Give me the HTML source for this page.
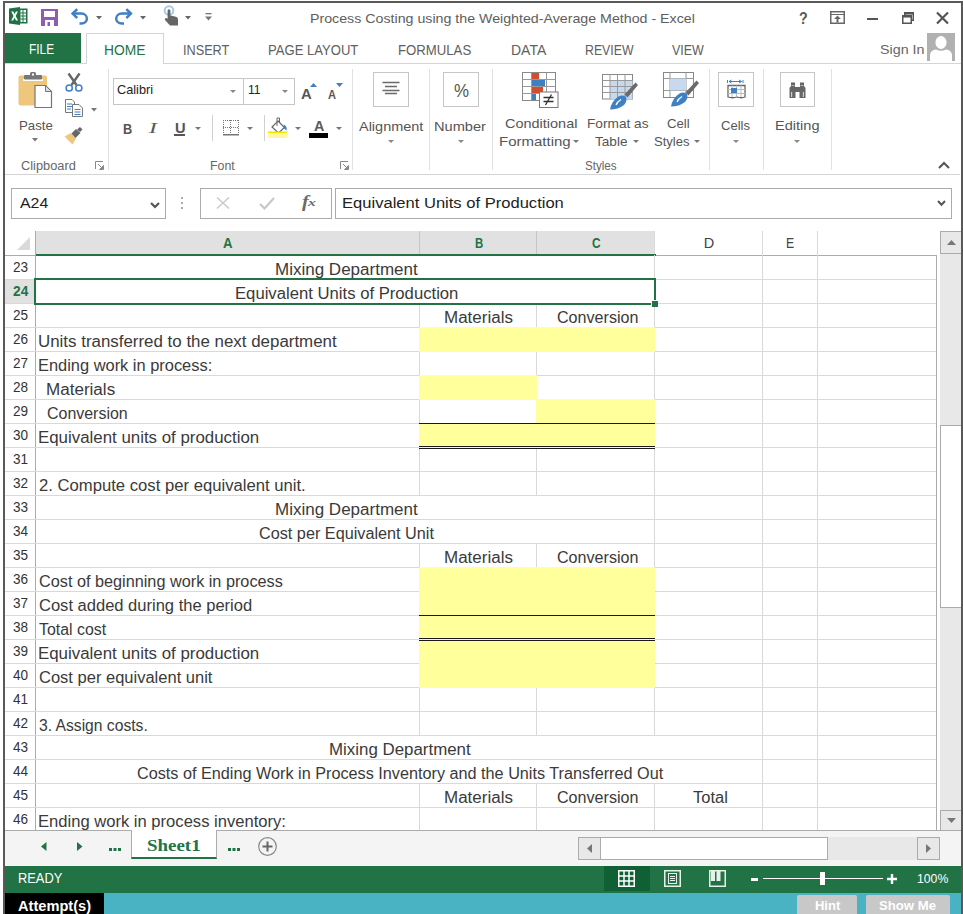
<!DOCTYPE html>
<html><head><meta charset="utf-8">
<style>
*{margin:0;padding:0;box-sizing:border-box}
html,body{width:963px;height:914px;overflow:hidden;background:#fff;position:relative;font-family:"Liberation Sans",sans-serif;color:#444}
.a{position:absolute}
.t{position:absolute;white-space:nowrap;line-height:1;transform-origin:0 0}
svg{position:absolute;overflow:visible}
</style></head><body>
<div class="a" style="left:3px;top:1px;width:960px;height:2px;background:#595959"></div>
<div class="a" style="left:3px;top:1px;width:2px;height:913px;background:#595959"></div>
<div class="a" style="left:961px;top:1px;width:2px;height:913px;background:#595959"></div>
<svg style="left:9px;top:7px" width="19" height="18" viewBox="0 0 19 18">
<path d="M0 1.5 L11 0 L11 18 L0 16.5 Z" fill="#1e7145"/>
<rect x="10" y="1.5" width="8.5" height="15" fill="#1e7145"/>
<rect x="11.5" y="3" width="5.5" height="12" fill="#fff"/>
<path d="M11.5 6h5.5M11.5 9h5.5M11.5 12h5.5M14 3v12" stroke="#1e7145" stroke-width="1"/>
<path d="M2.2 4.5 L4.3 4.5 L5.6 7 L6.9 4.5 L8.9 4.5 L6.7 9 L9 13.5 L7 13.5 L5.6 10.8 L4.2 13.5 L2.2 13.5 L4.5 9 Z" fill="#fff"/>
</svg>
<svg style="left:41px;top:9px" width="17" height="17" viewBox="0 0 17 17">
<path d="M0 0 H17 V17 H0 Z" fill="#8e5bb5"/>
<rect x="3" y="2" width="11" height="6" fill="#fff"/>
<rect x="4" y="11" width="9" height="6" fill="#fff"/>
<rect x="6.5" y="13" width="2.5" height="4" fill="#8e5bb5"/>
</svg>
<svg style="left:71px;top:8px" width="18" height="16" viewBox="0 0 18 16">
<path d="M6.2 1.2 L1.6 5.6 L6.2 10" fill="none" stroke="#3f7fc4" stroke-width="2.5"/>
<path d="M2.2 5.6 H10.5 A5.4 5 0 0 1 10.5 15.6 H8.5" fill="none" stroke="#3f7fc4" stroke-width="2.5"/>
</svg>
<svg style="left:96px;top:16px" width="6" height="4"><path d="M0 0H6L3 3.5Z" fill="#666"/></svg>
<svg style="left:114px;top:8px" width="19" height="16" viewBox="0 0 19 16">
<path d="M12.3 1.2 L16.9 5.6 L12.3 10" fill="none" stroke="#3f7fc4" stroke-width="2.5"/>
<path d="M16.3 5.6 H7.8 A5.6 5 0 0 0 7.8 15.6 H10" fill="none" stroke="#3f7fc4" stroke-width="2.5"/>
</svg>
<svg style="left:140px;top:16px" width="6" height="4"><path d="M0 0H6L3 3.5Z" fill="#666"/></svg>
<svg style="left:164px;top:5px" width="15" height="21" viewBox="0 0 15 21">
<circle cx="5" cy="5.5" r="4.3" fill="none" stroke="#a9c8ea" stroke-width="2"/>
<path d="M3.6 5 Q5 3.6 6.4 5 V10.5 L11 11.5 Q14 12 14 14.5 V20.5 H6 L0.8 14.8 Q0.5 13 2.2 13 L3.6 13.8 Z" fill="#666"/>
</svg>
<svg style="left:185px;top:16px" width="6" height="4"><path d="M0 0H6L3 3.5Z" fill="#666"/></svg>
<svg style="left:205px;top:13px" width="7" height="8"><rect x="0.5" y="0" width="6" height="1.3" fill="#777"/><path d="M0 3.5H7L3.5 7.5Z" fill="#777"/></svg>
<svg style="left:830px;top:11px" width="15" height="13" viewBox="0 0 15 13">
<rect x="0.75" y="0.75" width="13.5" height="11.5" fill="none" stroke="#666" stroke-width="1.5"/>
<path d="M1 3.5H14" stroke="#666" stroke-width="1"/>
<path d="M7.5 4.5 L4 8 H6.5 V11.5 H8.5 V8 H11 Z" fill="#666"/>
</svg>
<div class="a" style="left:867px;top:18px;width:11px;height:2px;background:#555"></div>
<svg style="left:902px;top:12px" width="12" height="12" viewBox="0 0 12 12">
<rect x="2.75" y="0.75" width="8.5" height="7.5" fill="none" stroke="#555" stroke-width="1.5"/>
<rect x="0.75" y="3.75" width="8.5" height="7.5" fill="#fff" stroke="#555" stroke-width="1.5"/>
<rect x="0.75" y="3.75" width="8.5" height="1.8" fill="#555"/>
<rect x="2.75" y="0.75" width="8.5" height="1.8" fill="#555"/>
</svg>
<svg style="left:936px;top:12px" width="13" height="12" viewBox="0 0 13 12">
<path d="M1 0.5 L12 11.5 M12 0.5 L1 11.5" stroke="#555" stroke-width="2.2"/>
</svg>
<div class="a" style="left:5px;top:63px;width:956px;height:1px;background:#d4d4d4"></div>
<div class="a" style="left:5px;top:33px;width:76px;height:30px;background:#217346"></div>
<div class="a" style="left:86px;top:33px;width:78px;height:31px;border:1px solid #d4d4d4;border-bottom:none;background:#fff"></div>
<svg style="left:927px;top:33px" width="28" height="28" viewBox="0 0 28 28">
<rect x="0" y="0" width="28" height="28" fill="#b1b1b1"/>
<ellipse cx="14" cy="9.5" rx="5.6" ry="6.5" fill="#fff"/>
<path d="M3 28 V22 Q3.5 17 9 16.5 Q14 19 19 16.5 Q24.5 17 25 22 V28 Z" fill="#fff"/>
</svg>
<div class="a" style="left:5px;top:174px;width:955px;height:1px;background:#d4d4d4"></div>
<div class="a" style="left:108px;top:69px;width:1px;height:101px;background:#e1e1e1"></div>
<div class="a" style="left:352px;top:69px;width:1px;height:101px;background:#e1e1e1"></div>
<div class="a" style="left:429px;top:69px;width:1px;height:101px;background:#e1e1e1"></div>
<div class="a" style="left:492px;top:69px;width:1px;height:101px;background:#e1e1e1"></div>
<div class="a" style="left:709px;top:69px;width:1px;height:101px;background:#e1e1e1"></div>
<div class="a" style="left:763px;top:69px;width:1px;height:101px;background:#e1e1e1"></div>
<div class="a" style="left:831px;top:69px;width:1px;height:101px;background:#e1e1e1"></div>
<svg style="left:18px;top:71px" width="36" height="38" viewBox="0 0 36 38">
<rect x="0.5" y="4.5" width="28.5" height="30" rx="2" fill="#eec77d"/>
<rect x="5" y="8" width="20" height="2" fill="#fff"/>
<rect x="6" y="4" width="18" height="4.5" rx="1" fill="#777"/>
<rect x="12" y="1" width="6" height="5" rx="1.5" fill="#777"/>
<rect x="14" y="2.5" width="2" height="2" fill="#fff"/>
<path d="M17 14.5 H27.5 L33.5 20.5 V36.5 H17 Z" fill="#fff" stroke="#777" stroke-width="1.2"/>
<path d="M27.5 14.5 V20.5 H33.5 Z" fill="#ddd" stroke="#777" stroke-width="1"/>
</svg>
<svg style="left:32px;top:138px" width="6" height="4"><path d="M0 0H6L3 3.5Z" fill="#777"/></svg>
<svg style="left:65px;top:73px" width="18" height="19" viewBox="0 0 18 19">
<path d="M3.5 0.5 L11.5 12 M14.5 0.5 L6.5 12" stroke="#666" stroke-width="2.4"/>
<circle cx="4.2" cy="15" r="3.1" fill="none" stroke="#3f7fc4" stroke-width="1.5"/>
<circle cx="13.8" cy="15" r="3.1" fill="none" stroke="#3f7fc4" stroke-width="1.5"/>
</svg>
<svg style="left:65px;top:99px" width="18" height="18" viewBox="0 0 18 18">
<path d="M0.5 0.5 H7 L9.5 3 V13.5 H0.5 Z" fill="#fff" stroke="#777" stroke-width="1"/>
<path d="M2 5h5M2 7.5h5M2 10h4" stroke="#3f7fc4" stroke-width="1"/>
<path d="M7.5 5.5 H14 L17.5 9 V17.5 H7.5 Z" fill="#fff" stroke="#777" stroke-width="1"/>
<path d="M9.5 10.5h6M9.5 13h6M9.5 15.5h6" stroke="#3f7fc4" stroke-width="1"/>
</svg>
<svg style="left:91px;top:108px" width="6" height="4"><path d="M0 0H6L3 3.5Z" fill="#777"/></svg>
<svg style="left:64px;top:127px" width="19" height="18" viewBox="0 0 19 18">
<path d="M0.5 9.5 L7 6 L12 11.5 L8.5 17.5 Z" fill="#eec77d"/>
<path d="M7.5 6.5 L12 2 L16.5 6 L11.5 11 Z" fill="#666"/>
<path d="M13 2.5 L16 0 L18.5 2.5 L16 5 Z" fill="#666"/>
</svg>
<svg style="left:95px;top:161px" width="9" height="9" viewBox="0 0 9 9">
<path d="M0.5 8 V0.5 H8" fill="none" stroke="#888" stroke-width="1"/>
<path d="M3 3 L7.5 7.5 M8.5 4.5 V8.5 H4.5 Z" stroke="#888" stroke-width="1" fill="#888"/>
</svg>
<div class="a" style="left:113px;top:78px;width:131px;height:27px;border:1px solid #c6c6c6;background:#fff"></div>
<div class="a" style="left:243px;top:78px;width:52px;height:27px;border:1px solid #c6c6c6;background:#fff"></div>
<svg style="left:230px;top:90px" width="6" height="4"><path d="M0 0H6L3 3Z" fill="#888"/></svg>
<svg style="left:282px;top:90px" width="6" height="4"><path d="M0 0H6L3 3Z" fill="#888"/></svg>
<svg style="left:310px;top:83px" width="7" height="4"><path d="M0 4H7L3.5 0Z" fill="#3f7fc4"/></svg>
<svg style="left:336px;top:83px" width="7" height="4"><path d="M0 0H7L3.5 4Z" fill="#3f7fc4"/></svg>
<div class="a" style="left:174px;top:134px;width:11px;height:1.5px;background:#555"></div>
<svg style="left:195px;top:127px" width="6" height="4"><path d="M0 0H6L3 3Z" fill="#777"/></svg>
<div class="a" style="left:212px;top:115px;width:1px;height:26px;background:#d0d0d0"></div>
<svg style="left:223px;top:120px" width="16" height="16" viewBox="0 0 16 16"><g fill="#777"><rect x="0" y="0" width="1" height="1"/><rect x="0" y="2" width="1" height="1"/><rect x="0" y="4" width="1" height="1"/><rect x="0" y="6" width="1" height="1"/><rect x="0" y="8" width="1" height="1"/><rect x="0" y="10" width="1" height="1"/><rect x="0" y="12" width="1" height="1"/><rect x="7" y="0" width="1" height="1"/><rect x="7" y="2" width="1" height="1"/><rect x="7" y="4" width="1" height="1"/><rect x="7" y="6" width="1" height="1"/><rect x="7" y="8" width="1" height="1"/><rect x="7" y="10" width="1" height="1"/><rect x="7" y="12" width="1" height="1"/><rect x="15" y="0" width="1" height="1"/><rect x="15" y="2" width="1" height="1"/><rect x="15" y="4" width="1" height="1"/><rect x="15" y="6" width="1" height="1"/><rect x="15" y="8" width="1" height="1"/><rect x="15" y="10" width="1" height="1"/><rect x="15" y="12" width="1" height="1"/><rect x="0" y="0" width="1" height="1"/><rect x="2" y="0" width="1" height="1"/><rect x="4" y="0" width="1" height="1"/><rect x="6" y="0" width="1" height="1"/><rect x="8" y="0" width="1" height="1"/><rect x="10" y="0" width="1" height="1"/><rect x="12" y="0" width="1" height="1"/><rect x="14" y="0" width="1" height="1"/><rect x="0" y="7" width="1" height="1"/><rect x="2" y="7" width="1" height="1"/><rect x="4" y="7" width="1" height="1"/><rect x="6" y="7" width="1" height="1"/><rect x="8" y="7" width="1" height="1"/><rect x="10" y="7" width="1" height="1"/><rect x="12" y="7" width="1" height="1"/><rect x="14" y="7" width="1" height="1"/></g><rect x="0" y="14" width="16" height="1.5" fill="#777"/></svg>
<svg style="left:247px;top:127px" width="6" height="4"><path d="M0 0H6L3 3Z" fill="#777"/></svg>
<div class="a" style="left:264px;top:115px;width:1px;height:26px;background:#d0d0d0"></div>
<svg style="left:268px;top:117px" width="20" height="21" viewBox="0 0 20 21">
<path d="M10 4 L16.5 10.5 L10.5 16 L4 10 Z" fill="#fff" stroke="#666" stroke-width="1.2"/>
<path d="M9 1 V9 M9 1 H11.5 V5" fill="none" stroke="#666" stroke-width="1"/>
<path d="M16 7.5 Q19.5 9.5 18.5 13.5 L15.5 11 Z" fill="#3f7fc4"/>
<rect x="0" y="14.5" width="19" height="1.6" fill="#f2e600"/>
<rect x="0" y="16.1" width="19" height="4.9" fill="#fdf9a3"/>
</svg>
<svg style="left:295px;top:127px" width="6" height="4"><path d="M0 0H6L3 3Z" fill="#777"/></svg>
<div class="a" style="left:309px;top:133px;width:19px;height:5px;background:#000"></div>
<svg style="left:336px;top:127px" width="6" height="4"><path d="M0 0H6L3 3Z" fill="#777"/></svg>
<svg style="left:340px;top:161px" width="9" height="9" viewBox="0 0 9 9">
<path d="M0.5 8 V0.5 H8" fill="none" stroke="#888" stroke-width="1"/>
<path d="M3 3 L7.5 7.5 M8.5 4.5 V8.5 H4.5 Z" stroke="#888" stroke-width="1" fill="#888"/>
</svg>
<div class="a" style="left:373px;top:72px;width:36px;height:35px;border:1px solid #c6c6c6"></div>
<svg style="left:382px;top:81px" width="18" height="14" viewBox="0 0 18 14">
<path d="M0.5 1.5H17.5M3 5.5H15M0.5 9.5H17.5M3 12.5H15" stroke="#6a6a6a" stroke-width="1.3"/>
</svg>
<svg style="left:388px;top:140px" width="6" height="4"><path d="M0 0H6L3 3Z" fill="#888"/></svg>
<div class="a" style="left:443px;top:72px;width:36px;height:35px;border:1px solid #c6c6c6"></div>
<svg style="left:458px;top:140px" width="6" height="4"><path d="M0 0H6L3 3Z" fill="#888"/></svg>
<svg style="left:522px;top:72px" width="37" height="36" viewBox="0 0 37 36">
<rect x="0.5" y="0.5" width="33" height="28" fill="#fff" stroke="#888" stroke-width="1"/>
<path d="M0.5 7.5H33.5M0.5 14.5H33.5M0.5 21.5H33.5M9.5 0.5V28.5M24.5 0.5V28.5" stroke="#999" stroke-width="1"/>
<rect x="10" y="1" width="7" height="6" fill="#d24d2c"/>
<rect x="10" y="8" width="13" height="6" fill="#3f7fc4"/>
<rect x="10" y="15" width="11" height="6" fill="#d24d2c"/>
<rect x="10" y="22" width="4" height="6" fill="#3f7fc4"/>
<rect x="17.5" y="20" width="18.5" height="15.5" fill="#fff" stroke="#777" stroke-width="1"/>
<path d="M21.5 25.5H31.5M21.5 29.5H31.5M29.5 22.5L23.5 33" stroke="#333" stroke-width="1.3"/>
</svg>
<svg style="left:573px;top:140px" width="6" height="4"><path d="M0 0H6L3 3Z" fill="#777"/></svg>
<svg style="left:602px;top:74px" width="36" height="36" viewBox="0 0 36 36">
<rect x="0.5" y="0.5" width="30" height="24.5" fill="#fff" stroke="#888"/>
<rect x="8" y="6.5" width="22.5" height="18.5" fill="#c6d9ee"/>
<path d="M0.5 6.5H30.5M0.5 12.5H30.5M0.5 18.5H30.5M8 0.5V25M15.5 0.5V25M23 0.5V25" stroke="#999" stroke-width="1"/>
<path d="M22.5 20.5 L33.5 8.5 L36 11 L25.5 23.5 Z" fill="#6a6a6a"/>
<path d="M8 35.5 Q9.5 27 16.5 22.5 Q20.5 20.5 24 23 Q25.5 27 22 31 Q16 35.5 8 35.5 Z" fill="#3f7fc4"/>
<path d="M14 31 Q15.5 27.5 19 25.5" stroke="#fff" stroke-width="1.3" fill="none"/>
</svg>
<svg style="left:633px;top:140px" width="6" height="4"><path d="M0 0H6L3 3Z" fill="#777"/></svg>
<svg style="left:663px;top:72px" width="36" height="36" viewBox="0 0 36 36">
<rect x="0.5" y="0.5" width="30" height="25" fill="#fff" stroke="#888"/>
<path d="M0.5 6.5H30.5M0.5 18.5H30.5M7 0.5V25.5M23 0.5V25.5" stroke="#999" stroke-width="1"/>
<rect x="7" y="6.5" width="16" height="12" fill="#c6d9ee"/>
<path d="M22.5 20.5 L33.5 8.5 L36 11 L25.5 23.5 Z" fill="#6a6a6a"/>
<path d="M8 34.5 Q9.5 26 16.5 21.5 Q20.5 19.5 24 22 Q25.5 26 22 30 Q16 34.5 8 34.5 Z" fill="#3f7fc4"/>
<path d="M14 30 Q15.5 26.5 19 24.5" stroke="#fff" stroke-width="1.3" fill="none"/>
</svg>
<svg style="left:694px;top:140px" width="6" height="4"><path d="M0 0H6L3 3Z" fill="#777"/></svg>
<div class="a" style="left:718px;top:72px;width:36px;height:35px;border:1px solid #c6c6c6"></div>
<svg style="left:727px;top:80px" width="19" height="19" viewBox="0 0 19 19">
<path d="M0.5 0V3M16 0V3M2 1.5H14.5" stroke="#3f7fc4" stroke-width="1"/>
<path d="M2 1.5L4.5 0M2 1.5L4.5 3M14.5 1.5L12 0M14.5 1.5L12 3" stroke="#3f7fc4" stroke-width="1"/>
<path d="M1 5.5H18V17 Q14.5 18.5 10 17 Q5.5 18.5 1 17 Z" fill="#fff" stroke="#666" stroke-width="1.3"/>
<path d="M1 9.5H18M1 13.5H18M5 5.5V17M9.5 5.5V17M14 5.5V17" stroke="#bbb" stroke-width="1"/>
<rect x="4" y="8" width="6" height="5" fill="#3f7fc4"/>
</svg>
<svg style="left:733px;top:140px" width="6" height="4"><path d="M0 0H6L3 3Z" fill="#888"/></svg>
<div class="a" style="left:780px;top:72px;width:35px;height:35px;border:1px solid #c6c6c6"></div>
<svg style="left:788px;top:82px" width="19" height="16" viewBox="0 0 19 16">
<path d="M3 0.5H7V5H12V0.5H16V4L17.5 6V16H11.5V10H7.5V16H1.5V6L3 4Z" fill="#666"/>
<path d="M7.5 6.5H11.5V9H7.5Z" fill="#666"/>
<rect x="3" y="10" width="1.2" height="5" fill="#ccc"/>
<rect x="14.8" y="10" width="1.2" height="5" fill="#ccc"/>
<path d="M3.5 3.5H6.5M12.5 3.5H15.5" stroke="#ccc" stroke-width="0.8"/>
</svg>
<svg style="left:794px;top:140px" width="6" height="4"><path d="M0 0H6L3 3Z" fill="#888"/></svg>
<svg style="left:938px;top:161px" width="12" height="8" viewBox="0 0 12 8">
<path d="M1 7 L6 2 L11 7" fill="none" stroke="#555" stroke-width="2"/>
</svg>
<div class="a" style="left:11px;top:188px;width:155px;height:31px;border:1px solid #ababab"></div>
<svg style="left:150px;top:202px" width="10" height="7" viewBox="0 0 10 7">
<path d="M1 1 L5 5 L9 1" fill="none" stroke="#555" stroke-width="2.2"/>
</svg>
<svg style="left:181px;top:197px" width="3" height="13"><rect x="0" y="0" width="2" height="2" fill="#aaa"/><rect x="0" y="5" width="2" height="2" fill="#aaa"/><rect x="0" y="10" width="2" height="2" fill="#aaa"/></svg>
<div class="a" style="left:200px;top:188px;width:132px;height:31px;border:1px solid #ababab"></div>
<svg style="left:216px;top:197px" width="14" height="12" viewBox="0 0 14 12">
<path d="M1 0.5 L13 11.5 M13 0.5 L1 11.5" stroke="#c8c8c8" stroke-width="1.4"/>
</svg>
<svg style="left:259px;top:197px" width="16" height="13" viewBox="0 0 16 13">
<path d="M1 7 L5.5 11.5 L15 1" fill="none" stroke="#c6c6c6" stroke-width="2"/>
</svg>
<div class="a" style="left:335px;top:188px;width:617px;height:31px;border:1px solid #ababab"></div>
<svg style="left:937px;top:200px" width="9" height="7" viewBox="0 0 9 7">
<path d="M1 1 L4.5 4.7 L8 1" fill="none" stroke="#555" stroke-width="2"/>
</svg>
<div class="a" style="left:940px;top:231px;width:21px;height:600px;background:#e8e8e8"></div>
<div class="a" style="left:940px;top:231px;width:21px;height:23px;border:1px solid #ababab;border-right:none;background:#e8e8e8"></div>
<svg style="left:947px;top:240px" width="9" height="5"><path d="M0 5H9L4.5 0Z" fill="#777"/></svg>
<div class="a" style="left:940px;top:425px;width:21px;height:183px;border:1px solid #ababab;border-right:none;background:#fff"></div>
<div class="a" style="left:940px;top:810px;width:21px;height:21px;border:1px solid #ababab;border-right:none;background:#e8e8e8"></div>
<svg style="left:947px;top:818px" width="9" height="5"><path d="M0 0H9L4.5 5Z" fill="#777"/></svg>
<div class="a" style="left:5px;top:830px;width:956px;height:36px;background:#f4f4f4;border-top:1px solid #ababab;z-index:5"></div>
<div class="a" style="left:131px;top:830px;width:86px;height:29px;background:#fff;border:1px solid #ababab;border-top:none;border-bottom:2px solid #217346;z-index:6"></div>
<svg style="left:41px;top:842px;z-index:6" width="6" height="9"><path d="M5.5 0V9L0 4.5Z" fill="#217346"/></svg>
<svg style="left:77px;top:842px;z-index:6" width="6" height="9"><path d="M0 0V9L5.5 4.5Z" fill="#217346"/></svg>
<svg style="left:109px;top:848px;z-index:6" width="13" height="4"><rect x="0" y="0" width="3" height="3" fill="#217346"/><rect x="4.5" y="0" width="3" height="3" fill="#217346"/><rect x="9" y="0" width="3" height="3" fill="#217346"/></svg>
<svg style="left:228px;top:848px;z-index:6" width="13" height="4"><rect x="0" y="0" width="3" height="3" fill="#217346"/><rect x="4.5" y="0" width="3" height="3" fill="#217346"/><rect x="9" y="0" width="3" height="3" fill="#217346"/></svg>
<svg style="left:258px;top:837px;z-index:6" width="19" height="19" viewBox="0 0 19 19">
<circle cx="9.5" cy="9.5" r="8.8" fill="none" stroke="#888" stroke-width="1.2"/>
<path d="M9.5 4.5V14.5M4.5 9.5H14.5" stroke="#666" stroke-width="2"/>
</svg>
<div class="a" style="left:578px;top:837px;width:339px;height:23px;background:#e8e8e8;z-index:6"></div>
<div class="a" style="left:578px;top:837px;width:23px;height:23px;border:1px solid #ababab;background:#e8e8e8;z-index:6"></div>
<svg style="left:587px;top:844px;z-index:7" width="5" height="9"><path d="M5 0V9L0 4.5Z" fill="#777"/></svg>
<div class="a" style="left:600px;top:837px;width:228px;height:23px;border:1px solid #ababab;background:#fff;z-index:6"></div>
<div class="a" style="left:917px;top:837px;width:23px;height:23px;border:1px solid #ababab;background:#e8e8e8;z-index:6"></div>
<svg style="left:926px;top:844px;z-index:7" width="5" height="9"><path d="M0 0V9L5 4.5Z" fill="#777"/></svg>
<div class="a" style="left:5px;top:866px;width:956px;height:27px;background:#217346;z-index:5"></div>
<div class="a" style="left:604px;top:866px;width:46px;height:25px;background:#0f6135;z-index:6"></div>
<svg style="left:618px;top:870px;z-index:7" width="17" height="17" viewBox="0 0 17 17">
<path d="M0.75 0.75H16.25V16.25H0.75Z M0.75 6H16.25M0.75 11H16.25M6 0.75V16.25M11 0.75V16.25" fill="none" stroke="#fff" stroke-width="1.5"/>
</svg>
<svg style="left:664px;top:870px;z-index:7" width="17" height="17" viewBox="0 0 17 17">
<rect x="0.75" y="0.75" width="15.5" height="15.5" fill="none" stroke="#e8f0ea" stroke-width="1.5"/>
<rect x="4.5" y="3.5" width="8" height="10" fill="none" stroke="#e8f0ea" stroke-width="1"/>
<path d="M6 6.5H11M6 8.5H11M6 10.5H11" stroke="#e8f0ea" stroke-width="1"/>
</svg>
<svg style="left:709px;top:870px;z-index:7" width="17" height="17" viewBox="0 0 17 17">
<path d="M0.75 0.75H16.25V16.25H0.75Z" fill="none" stroke="#e8f0ea" stroke-width="1.5"/>
<rect x="2" y="1" width="4" height="10" fill="#e8f0ea"/>
<rect x="7.5" y="1" width="4" height="10" fill="#e8f0ea"/>
</svg>
<div class="a" style="left:751px;top:878px;width:7px;height:3px;background:#fff;z-index:7"></div>
<div class="a" style="left:763px;top:878px;width:120px;height:1px;background:#fff;z-index:7"></div>
<div class="a" style="left:820px;top:872px;width:5px;height:13px;background:#fff;z-index:7"></div>
<svg style="left:887px;top:874px;z-index:7" width="10" height="10"><path d="M5 0V10M0 5H10" stroke="#fff" stroke-width="2.4"/></svg>
<div class="a" style="left:5px;top:893px;width:99px;height:21px;background:#000;z-index:5"></div>
<div class="a" style="left:104px;top:893px;width:857px;height:21px;background:#4ab3c3;z-index:5"></div>
<div class="a" style="left:797px;top:895px;width:60px;height:19px;background:#c8c8c8;border-radius:2px 2px 0 0;z-index:6"></div>
<div class="a" style="left:866px;top:895px;width:84px;height:19px;background:#c8c8c8;border-radius:2px 2px 0 0;z-index:6"></div>
<div class="a" style="left:36px;top:231px;width:618px;height:24px;background:#e1e1e1"></div>
<div class="a" style="left:419px;top:231px;width:1px;height:24px;background:#c6c6c6"></div>
<div class="a" style="left:536px;top:231px;width:1px;height:24px;background:#c6c6c6"></div>
<div class="a" style="left:654px;top:231px;width:1px;height:24px;background:#dadada"></div>
<div class="a" style="left:762px;top:231px;width:1px;height:24px;background:#dadada"></div>
<div class="a" style="left:817px;top:231px;width:1px;height:24px;background:#dadada"></div>
<div class="a" style="left:5px;top:255px;width:932px;height:1px;background:#ababab"></div>
<div class="a" style="left:36px;top:254px;width:620px;height:2px;background:#217346"></div>
<svg style="left:17px;top:237px" width="14" height="14"><path d="M13 0 L13 13 L0 13 Z" fill="#dadada"/></svg>
<div class="a" style="left:35px;top:231px;width:1px;height:599px;background:#ababab"></div>
<div class="a" style="left:5px;top:279px;width:30px;height:24px;background:#e1e1e1"></div>
<div class="a" style="left:5px;top:279px;width:931px;height:1px;background:#d9d9d9"></div>
<div class="a" style="left:5px;top:303px;width:931px;height:1px;background:#d9d9d9"></div>
<div class="a" style="left:5px;top:327px;width:931px;height:1px;background:#d9d9d9"></div>
<div class="a" style="left:5px;top:351px;width:931px;height:1px;background:#d9d9d9"></div>
<div class="a" style="left:5px;top:375px;width:931px;height:1px;background:#d9d9d9"></div>
<div class="a" style="left:5px;top:399px;width:931px;height:1px;background:#d9d9d9"></div>
<div class="a" style="left:5px;top:423px;width:931px;height:1px;background:#d9d9d9"></div>
<div class="a" style="left:5px;top:447px;width:931px;height:1px;background:#d9d9d9"></div>
<div class="a" style="left:5px;top:471px;width:931px;height:1px;background:#d9d9d9"></div>
<div class="a" style="left:5px;top:495px;width:931px;height:1px;background:#d9d9d9"></div>
<div class="a" style="left:5px;top:519px;width:931px;height:1px;background:#d9d9d9"></div>
<div class="a" style="left:5px;top:543px;width:931px;height:1px;background:#d9d9d9"></div>
<div class="a" style="left:5px;top:567px;width:931px;height:1px;background:#d9d9d9"></div>
<div class="a" style="left:5px;top:591px;width:931px;height:1px;background:#d9d9d9"></div>
<div class="a" style="left:5px;top:615px;width:931px;height:1px;background:#d9d9d9"></div>
<div class="a" style="left:5px;top:639px;width:931px;height:1px;background:#d9d9d9"></div>
<div class="a" style="left:5px;top:663px;width:931px;height:1px;background:#d9d9d9"></div>
<div class="a" style="left:5px;top:687px;width:931px;height:1px;background:#d9d9d9"></div>
<div class="a" style="left:5px;top:711px;width:931px;height:1px;background:#d9d9d9"></div>
<div class="a" style="left:5px;top:735px;width:931px;height:1px;background:#d9d9d9"></div>
<div class="a" style="left:5px;top:759px;width:931px;height:1px;background:#d9d9d9"></div>
<div class="a" style="left:5px;top:783px;width:931px;height:1px;background:#d9d9d9"></div>
<div class="a" style="left:5px;top:807px;width:931px;height:1px;background:#d9d9d9"></div>
<div class="a" style="left:654px;top:255px;width:1px;height:24px;background:#d9d9d9"></div>
<div class="a" style="left:762px;top:255px;width:1px;height:24px;background:#d9d9d9"></div>
<div class="a" style="left:817px;top:255px;width:1px;height:24px;background:#d9d9d9"></div>
<div class="a" style="left:654px;top:279px;width:1px;height:24px;background:#d9d9d9"></div>
<div class="a" style="left:762px;top:279px;width:1px;height:24px;background:#d9d9d9"></div>
<div class="a" style="left:817px;top:279px;width:1px;height:24px;background:#d9d9d9"></div>
<div class="a" style="left:419px;top:303px;width:1px;height:24px;background:#d9d9d9"></div>
<div class="a" style="left:536px;top:303px;width:1px;height:24px;background:#d9d9d9"></div>
<div class="a" style="left:654px;top:303px;width:1px;height:24px;background:#d9d9d9"></div>
<div class="a" style="left:762px;top:303px;width:1px;height:24px;background:#d9d9d9"></div>
<div class="a" style="left:817px;top:303px;width:1px;height:24px;background:#d9d9d9"></div>
<div class="a" style="left:419px;top:327px;width:1px;height:24px;background:#d9d9d9"></div>
<div class="a" style="left:536px;top:327px;width:1px;height:24px;background:#d9d9d9"></div>
<div class="a" style="left:654px;top:327px;width:1px;height:24px;background:#d9d9d9"></div>
<div class="a" style="left:762px;top:327px;width:1px;height:24px;background:#d9d9d9"></div>
<div class="a" style="left:817px;top:327px;width:1px;height:24px;background:#d9d9d9"></div>
<div class="a" style="left:419px;top:351px;width:1px;height:24px;background:#d9d9d9"></div>
<div class="a" style="left:536px;top:351px;width:1px;height:24px;background:#d9d9d9"></div>
<div class="a" style="left:654px;top:351px;width:1px;height:24px;background:#d9d9d9"></div>
<div class="a" style="left:762px;top:351px;width:1px;height:24px;background:#d9d9d9"></div>
<div class="a" style="left:817px;top:351px;width:1px;height:24px;background:#d9d9d9"></div>
<div class="a" style="left:419px;top:375px;width:1px;height:24px;background:#d9d9d9"></div>
<div class="a" style="left:536px;top:375px;width:1px;height:24px;background:#d9d9d9"></div>
<div class="a" style="left:654px;top:375px;width:1px;height:24px;background:#d9d9d9"></div>
<div class="a" style="left:762px;top:375px;width:1px;height:24px;background:#d9d9d9"></div>
<div class="a" style="left:817px;top:375px;width:1px;height:24px;background:#d9d9d9"></div>
<div class="a" style="left:419px;top:399px;width:1px;height:24px;background:#d9d9d9"></div>
<div class="a" style="left:536px;top:399px;width:1px;height:24px;background:#d9d9d9"></div>
<div class="a" style="left:654px;top:399px;width:1px;height:24px;background:#d9d9d9"></div>
<div class="a" style="left:762px;top:399px;width:1px;height:24px;background:#d9d9d9"></div>
<div class="a" style="left:817px;top:399px;width:1px;height:24px;background:#d9d9d9"></div>
<div class="a" style="left:419px;top:423px;width:1px;height:24px;background:#d9d9d9"></div>
<div class="a" style="left:536px;top:423px;width:1px;height:24px;background:#d9d9d9"></div>
<div class="a" style="left:654px;top:423px;width:1px;height:24px;background:#d9d9d9"></div>
<div class="a" style="left:762px;top:423px;width:1px;height:24px;background:#d9d9d9"></div>
<div class="a" style="left:817px;top:423px;width:1px;height:24px;background:#d9d9d9"></div>
<div class="a" style="left:419px;top:447px;width:1px;height:24px;background:#d9d9d9"></div>
<div class="a" style="left:536px;top:447px;width:1px;height:24px;background:#d9d9d9"></div>
<div class="a" style="left:654px;top:447px;width:1px;height:24px;background:#d9d9d9"></div>
<div class="a" style="left:762px;top:447px;width:1px;height:24px;background:#d9d9d9"></div>
<div class="a" style="left:817px;top:447px;width:1px;height:24px;background:#d9d9d9"></div>
<div class="a" style="left:419px;top:471px;width:1px;height:24px;background:#d9d9d9"></div>
<div class="a" style="left:536px;top:471px;width:1px;height:24px;background:#d9d9d9"></div>
<div class="a" style="left:654px;top:471px;width:1px;height:24px;background:#d9d9d9"></div>
<div class="a" style="left:762px;top:471px;width:1px;height:24px;background:#d9d9d9"></div>
<div class="a" style="left:817px;top:471px;width:1px;height:24px;background:#d9d9d9"></div>
<div class="a" style="left:654px;top:495px;width:1px;height:24px;background:#d9d9d9"></div>
<div class="a" style="left:762px;top:495px;width:1px;height:24px;background:#d9d9d9"></div>
<div class="a" style="left:817px;top:495px;width:1px;height:24px;background:#d9d9d9"></div>
<div class="a" style="left:654px;top:519px;width:1px;height:24px;background:#d9d9d9"></div>
<div class="a" style="left:762px;top:519px;width:1px;height:24px;background:#d9d9d9"></div>
<div class="a" style="left:817px;top:519px;width:1px;height:24px;background:#d9d9d9"></div>
<div class="a" style="left:419px;top:543px;width:1px;height:24px;background:#d9d9d9"></div>
<div class="a" style="left:536px;top:543px;width:1px;height:24px;background:#d9d9d9"></div>
<div class="a" style="left:654px;top:543px;width:1px;height:24px;background:#d9d9d9"></div>
<div class="a" style="left:762px;top:543px;width:1px;height:24px;background:#d9d9d9"></div>
<div class="a" style="left:817px;top:543px;width:1px;height:24px;background:#d9d9d9"></div>
<div class="a" style="left:419px;top:567px;width:1px;height:24px;background:#d9d9d9"></div>
<div class="a" style="left:536px;top:567px;width:1px;height:24px;background:#d9d9d9"></div>
<div class="a" style="left:654px;top:567px;width:1px;height:24px;background:#d9d9d9"></div>
<div class="a" style="left:762px;top:567px;width:1px;height:24px;background:#d9d9d9"></div>
<div class="a" style="left:817px;top:567px;width:1px;height:24px;background:#d9d9d9"></div>
<div class="a" style="left:419px;top:591px;width:1px;height:24px;background:#d9d9d9"></div>
<div class="a" style="left:536px;top:591px;width:1px;height:24px;background:#d9d9d9"></div>
<div class="a" style="left:654px;top:591px;width:1px;height:24px;background:#d9d9d9"></div>
<div class="a" style="left:762px;top:591px;width:1px;height:24px;background:#d9d9d9"></div>
<div class="a" style="left:817px;top:591px;width:1px;height:24px;background:#d9d9d9"></div>
<div class="a" style="left:419px;top:615px;width:1px;height:24px;background:#d9d9d9"></div>
<div class="a" style="left:536px;top:615px;width:1px;height:24px;background:#d9d9d9"></div>
<div class="a" style="left:654px;top:615px;width:1px;height:24px;background:#d9d9d9"></div>
<div class="a" style="left:762px;top:615px;width:1px;height:24px;background:#d9d9d9"></div>
<div class="a" style="left:817px;top:615px;width:1px;height:24px;background:#d9d9d9"></div>
<div class="a" style="left:419px;top:639px;width:1px;height:24px;background:#d9d9d9"></div>
<div class="a" style="left:536px;top:639px;width:1px;height:24px;background:#d9d9d9"></div>
<div class="a" style="left:654px;top:639px;width:1px;height:24px;background:#d9d9d9"></div>
<div class="a" style="left:762px;top:639px;width:1px;height:24px;background:#d9d9d9"></div>
<div class="a" style="left:817px;top:639px;width:1px;height:24px;background:#d9d9d9"></div>
<div class="a" style="left:419px;top:663px;width:1px;height:24px;background:#d9d9d9"></div>
<div class="a" style="left:536px;top:663px;width:1px;height:24px;background:#d9d9d9"></div>
<div class="a" style="left:654px;top:663px;width:1px;height:24px;background:#d9d9d9"></div>
<div class="a" style="left:762px;top:663px;width:1px;height:24px;background:#d9d9d9"></div>
<div class="a" style="left:817px;top:663px;width:1px;height:24px;background:#d9d9d9"></div>
<div class="a" style="left:419px;top:687px;width:1px;height:24px;background:#d9d9d9"></div>
<div class="a" style="left:536px;top:687px;width:1px;height:24px;background:#d9d9d9"></div>
<div class="a" style="left:654px;top:687px;width:1px;height:24px;background:#d9d9d9"></div>
<div class="a" style="left:762px;top:687px;width:1px;height:24px;background:#d9d9d9"></div>
<div class="a" style="left:817px;top:687px;width:1px;height:24px;background:#d9d9d9"></div>
<div class="a" style="left:419px;top:711px;width:1px;height:24px;background:#d9d9d9"></div>
<div class="a" style="left:536px;top:711px;width:1px;height:24px;background:#d9d9d9"></div>
<div class="a" style="left:654px;top:711px;width:1px;height:24px;background:#d9d9d9"></div>
<div class="a" style="left:762px;top:711px;width:1px;height:24px;background:#d9d9d9"></div>
<div class="a" style="left:817px;top:711px;width:1px;height:24px;background:#d9d9d9"></div>
<div class="a" style="left:762px;top:735px;width:1px;height:24px;background:#d9d9d9"></div>
<div class="a" style="left:817px;top:735px;width:1px;height:24px;background:#d9d9d9"></div>
<div class="a" style="left:762px;top:759px;width:1px;height:24px;background:#d9d9d9"></div>
<div class="a" style="left:817px;top:759px;width:1px;height:24px;background:#d9d9d9"></div>
<div class="a" style="left:419px;top:783px;width:1px;height:24px;background:#d9d9d9"></div>
<div class="a" style="left:536px;top:783px;width:1px;height:24px;background:#d9d9d9"></div>
<div class="a" style="left:654px;top:783px;width:1px;height:24px;background:#d9d9d9"></div>
<div class="a" style="left:762px;top:783px;width:1px;height:24px;background:#d9d9d9"></div>
<div class="a" style="left:817px;top:783px;width:1px;height:24px;background:#d9d9d9"></div>
<div class="a" style="left:419px;top:807px;width:1px;height:23px;background:#d9d9d9"></div>
<div class="a" style="left:536px;top:807px;width:1px;height:23px;background:#d9d9d9"></div>
<div class="a" style="left:654px;top:807px;width:1px;height:23px;background:#d9d9d9"></div>
<div class="a" style="left:762px;top:807px;width:1px;height:23px;background:#d9d9d9"></div>
<div class="a" style="left:817px;top:807px;width:1px;height:23px;background:#d9d9d9"></div>
<div class="a" style="left:936px;top:255px;width:1px;height:575px;background:#ababab"></div>
<div class="a" style="left:419px;top:327px;width:236px;height:25px;background:#ffff9c"></div>
<div class="a" style="left:419px;top:375px;width:118px;height:25px;background:#ffff9c"></div>
<div class="a" style="left:536px;top:399px;width:119px;height:25px;background:#ffff9c"></div>
<div class="a" style="left:419px;top:423px;width:236px;height:25px;background:#ffff9c"></div>
<div class="a" style="left:419px;top:567px;width:236px;height:25px;background:#ffff9c"></div>
<div class="a" style="left:419px;top:591px;width:236px;height:25px;background:#ffff9c"></div>
<div class="a" style="left:419px;top:615px;width:236px;height:25px;background:#ffff9c"></div>
<div class="a" style="left:419px;top:639px;width:236px;height:25px;background:#ffff9c"></div>
<div class="a" style="left:419px;top:663px;width:236px;height:25px;background:#ffff9c"></div>
<div class="a" style="left:419px;top:423px;width:236px;height:1px;background:#1a1a1a"></div>
<div class="a" style="left:419px;top:446px;width:236px;height:1px;background:#1a1a1a"></div>
<div class="a" style="left:419px;top:448px;width:236px;height:1px;background:#1a1a1a"></div>
<div class="a" style="left:419px;top:615px;width:236px;height:1px;background:#1a1a1a"></div>
<div class="a" style="left:419px;top:638px;width:236px;height:1px;background:#1a1a1a"></div>
<div class="a" style="left:419px;top:640px;width:236px;height:1px;background:#1a1a1a"></div>
<div class="a" style="left:34px;top:278px;width:622px;height:27px;border:2px solid #217346"></div>
<div class="a" style="left:651px;top:300px;width:7px;height:7px;background:#fff"></div>
<div class="a" style="left:652px;top:301px;width:6px;height:6px;background:#217346"></div>
<div class="t" style="left:309.91px;top:11.75px;font-size:13px;color:#5e5e5e;font-weight:400;font-family:'Liberation Sans';transform:scaleX(1.0929);">Process Costing using the Weighted-Average Method - Excel</div>
<div class="t" style="left:799.00px;top:9.78px;font-size:16.5px;color:#5a5a5a;font-weight:700;font-family:'Liberation Sans';transform:scaleX(0.8600);">?</div>
<div class="t" style="left:29.15px;top:42.10px;font-size:14px;color:#fff;font-weight:400;font-family:'Liberation Sans';transform:scaleX(0.8502);">FILE</div>
<div class="t" style="left:104.01px;top:43.00px;font-size:14px;color:#217346;font-weight:400;font-family:'Liberation Sans';transform:scaleX(0.9862);">HOME</div>
<div class="t" style="left:182.79px;top:43.00px;font-size:14px;color:#606060;font-weight:400;font-family:'Liberation Sans';transform:scaleX(0.9063);">INSERT</div>
<div class="t" style="left:268.47px;top:43.00px;font-size:14px;color:#606060;font-weight:400;font-family:'Liberation Sans';transform:scaleX(0.9337);">PAGE LAYOUT</div>
<div class="t" style="left:398.36px;top:43.00px;font-size:14px;color:#606060;font-weight:400;font-family:'Liberation Sans';transform:scaleX(0.9405);">FORMULAS</div>
<div class="t" style="left:510.70px;top:43.00px;font-size:14px;color:#606060;font-weight:400;font-family:'Liberation Sans';transform:scaleX(0.9994);">DATA</div>
<div class="t" style="left:585.12px;top:43.00px;font-size:14px;color:#606060;font-weight:400;font-family:'Liberation Sans';transform:scaleX(0.8780);">REVIEW</div>
<div class="t" style="left:672.00px;top:43.00px;font-size:14px;color:#606060;font-weight:400;font-family:'Liberation Sans';transform:scaleX(0.8916);">VIEW</div>
<div class="t" style="left:880.00px;top:42.52px;font-size:13.5px;color:#666;font-weight:400;font-family:'Liberation Sans';transform:scaleX(1.0597);">Sign In</div>
<div class="t" style="left:18.62px;top:118.53px;font-size:13.5px;color:#555;font-weight:400;font-family:'Liberation Sans';transform:scaleX(0.9814);">Paste</div>
<div class="t" style="left:21.20px;top:159.57px;font-size:12.5px;color:#666;font-weight:400;font-family:'Liberation Sans';transform:scaleX(1.0233);">Clipboard</div>
<div class="t" style="left:117.10px;top:82.95px;font-size:13px;color:#222;font-weight:400;font-family:'Liberation Sans';transform:scaleX(0.9769);">Calibri</div>
<div class="t" style="left:247.60px;top:82.65px;font-size:13px;color:#222;font-weight:400;font-family:'Liberation Sans';transform:scaleX(0.9348);">11</div>
<div class="t" style="left:301.40px;top:86.25px;font-size:15px;color:#555;font-weight:700;font-family:'Liberation Sans';transform:scaleX(0.9909);">A</div>
<div class="t" style="left:328.30px;top:88.80px;font-size:12px;color:#555;font-weight:700;font-family:'Liberation Sans';transform:scaleX(0.9222);">A</div>
<div class="t" style="left:122.80px;top:122.10px;font-size:14px;color:#555;font-weight:700;font-family:'Liberation Sans';transform:scaleX(0.9100);">B</div>
<div class="t" style="left:149.10px;top:122.38px;font-size:14px;color:#555;font-weight:400;font-family:'Liberation Serif';transform:scaleX(1.6800);font-style:italic;">I</div>
<div class="t" style="left:174.50px;top:121.10px;font-size:14px;color:#555;font-weight:700;font-family:'Liberation Sans';transform:scaleX(1.0500);">U</div>
<div class="t" style="left:313.90px;top:118.25px;font-size:15px;color:#5a5a5a;font-weight:700;font-family:'Liberation Sans';transform:scaleX(0.9545);">A</div>
<div class="t" style="left:209.61px;top:159.57px;font-size:12.5px;color:#666;font-weight:400;font-family:'Liberation Sans';transform:scaleX(0.9902);">Font</div>
<div class="t" style="left:358.90px;top:119.83px;font-size:13.5px;color:#555;font-weight:400;font-family:'Liberation Sans';transform:scaleX(1.0717);">Alignment</div>
<div class="t" style="left:454.20px;top:81.60px;font-size:18px;color:#555;font-weight:400;font-family:'Liberation Sans';transform:scaleX(0.9375);">%</div>
<div class="t" style="left:434.32px;top:119.83px;font-size:13.5px;color:#555;font-weight:400;font-family:'Liberation Sans';transform:scaleX(1.0817);">Number</div>
<div class="t" style="left:504.80px;top:116.53px;font-size:13.5px;color:#555;font-weight:400;font-family:'Liberation Sans';transform:scaleX(1.0718);">Conditional</div>
<div class="t" style="left:498.89px;top:134.53px;font-size:13.5px;color:#555;font-weight:400;font-family:'Liberation Sans';transform:scaleX(1.1109);">Formatting</div>
<div class="t" style="left:586.99px;top:116.53px;font-size:13.5px;color:#555;font-weight:400;font-family:'Liberation Sans';transform:scaleX(1.0131);">Format as</div>
<div class="t" style="left:595.00px;top:134.53px;font-size:13.5px;color:#555;font-weight:400;font-family:'Liberation Sans';transform:scaleX(1.0074);">Table</div>
<div class="t" style="left:666.70px;top:116.53px;font-size:13.5px;color:#555;font-weight:400;font-family:'Liberation Sans';transform:scaleX(0.9761);">Cell</div>
<div class="t" style="left:654.30px;top:134.53px;font-size:13.5px;color:#555;font-weight:400;font-family:'Liberation Sans';transform:scaleX(0.9645);">Styles</div>
<div class="t" style="left:584.80px;top:159.68px;font-size:12.5px;color:#666;font-weight:400;font-family:'Liberation Sans';transform:scaleX(0.9263);">Styles</div>
<div class="t" style="left:721.30px;top:119.43px;font-size:13.5px;color:#555;font-weight:400;font-family:'Liberation Sans';transform:scaleX(0.9651);">Cells</div>
<div class="t" style="left:774.82px;top:119.43px;font-size:13.5px;color:#555;font-weight:400;font-family:'Liberation Sans';transform:scaleX(1.0787);">Editing</div>
<div class="t" style="left:20.00px;top:195.15px;font-size:15px;color:#222;font-weight:400;font-family:'Liberation Sans';transform:scaleX(1.0589);">A24</div>
<div class="t" style="left:302.40px;top:194.22px;font-size:16px;color:#6a6a6a;font-weight:700;font-family:'Liberation Serif';transform:scaleX(1.2667);font-style:italic;">f</div>
<div class="t" style="left:308.00px;top:197.37px;font-size:11px;color:#6a6a6a;font-weight:700;font-family:'Liberation Serif';transform:scaleX(1.4167);font-style:italic;">x</div>
<div class="t" style="left:341.53px;top:194.82px;font-size:15.5px;color:#222;font-weight:400;font-family:'Liberation Sans';transform:scaleX(1.0683);">Equivalent Units of Production</div>
<div class="t" style="left:17.98px;top:871.10px;font-size:14px;color:#fff;font-weight:400;font-family:'Liberation Sans';transform:scaleX(0.9166);z-index:8;">READY</div>
<div class="t" style="left:917.00px;top:872.15px;font-size:13px;color:#fff;font-weight:400;font-family:'Liberation Sans';transform:scaleX(0.9409);z-index:8;">100%</div>
<div class="t" style="left:18.00px;top:898.60px;font-size:14px;color:#fff;font-weight:700;font-family:'Liberation Sans';transform:scaleX(1.0443);z-index:8;">Attempt(s)</div>
<div class="t" style="left:814.60px;top:899.42px;font-size:13.5px;color:#fff;font-weight:700;font-family:'Liberation Sans';transform:scaleX(0.9609);z-index:8;">Hint</div>
<div class="t" style="left:878.80px;top:899.42px;font-size:13.5px;color:#fff;font-weight:700;font-family:'Liberation Sans';transform:scaleX(0.9747);z-index:8;">Show Me</div>
<div class="t" style="left:147.40px;top:837.72px;font-size:16px;color:#217346;font-weight:700;font-family:'Liberation Serif';transform:scaleX(1.1825);z-index:8;">Sheet1</div>
<div class="t" style="left:222.70px;top:235.68px;font-size:14.5px;color:#217346;font-weight:700;font-family:'Liberation Sans';transform:scaleX(0.9091);">A</div>
<div class="t" style="left:475.30px;top:235.68px;font-size:14.5px;color:#217346;font-weight:700;font-family:'Liberation Sans';transform:scaleX(0.7900);">B</div>
<div class="t" style="left:591.50px;top:235.68px;font-size:14.5px;color:#217346;font-weight:700;font-family:'Liberation Sans';transform:scaleX(0.8182);">C</div>
<div class="t" style="left:703.80px;top:236.08px;font-size:14.5px;color:#444;font-weight:400;font-family:'Liberation Sans';transform:scaleX(1.0000);">D</div>
<div class="t" style="left:786.46px;top:236.08px;font-size:14.5px;color:#444;font-weight:400;font-family:'Liberation Sans';transform:scaleX(0.8444);">E</div>
<div class="t" style="left:12.60px;top:260.10px;font-size:14px;color:#333;font-weight:400;font-family:'Liberation Sans';transform:scaleX(0.9692);">23</div>
<div class="t" style="left:12.50px;top:284.10px;font-size:14px;color:#217346;font-weight:700;font-family:'Liberation Sans';transform:scaleX(0.9819);">24</div>
<div class="t" style="left:12.60px;top:308.10px;font-size:14px;color:#333;font-weight:400;font-family:'Liberation Sans';transform:scaleX(0.9692);">25</div>
<div class="t" style="left:12.60px;top:332.10px;font-size:14px;color:#333;font-weight:400;font-family:'Liberation Sans';transform:scaleX(0.9692);">26</div>
<div class="t" style="left:12.60px;top:356.10px;font-size:14px;color:#333;font-weight:400;font-family:'Liberation Sans';transform:scaleX(0.9692);">27</div>
<div class="t" style="left:12.60px;top:380.10px;font-size:14px;color:#333;font-weight:400;font-family:'Liberation Sans';transform:scaleX(0.9692);">28</div>
<div class="t" style="left:12.60px;top:404.10px;font-size:14px;color:#333;font-weight:400;font-family:'Liberation Sans';transform:scaleX(0.9692);">29</div>
<div class="t" style="left:12.60px;top:428.10px;font-size:14px;color:#333;font-weight:400;font-family:'Liberation Sans';transform:scaleX(0.9692);">30</div>
<div class="t" style="left:12.60px;top:452.10px;font-size:14px;color:#333;font-weight:400;font-family:'Liberation Sans';transform:scaleX(0.9692);">31</div>
<div class="t" style="left:12.60px;top:476.10px;font-size:14px;color:#333;font-weight:400;font-family:'Liberation Sans';transform:scaleX(0.9692);">32</div>
<div class="t" style="left:12.60px;top:500.10px;font-size:14px;color:#333;font-weight:400;font-family:'Liberation Sans';transform:scaleX(0.9692);">33</div>
<div class="t" style="left:12.60px;top:524.10px;font-size:14px;color:#333;font-weight:400;font-family:'Liberation Sans';transform:scaleX(0.9692);">34</div>
<div class="t" style="left:12.60px;top:548.10px;font-size:14px;color:#333;font-weight:400;font-family:'Liberation Sans';transform:scaleX(0.9692);">35</div>
<div class="t" style="left:12.60px;top:572.10px;font-size:14px;color:#333;font-weight:400;font-family:'Liberation Sans';transform:scaleX(0.9692);">36</div>
<div class="t" style="left:12.60px;top:596.10px;font-size:14px;color:#333;font-weight:400;font-family:'Liberation Sans';transform:scaleX(0.9692);">37</div>
<div class="t" style="left:12.60px;top:620.10px;font-size:14px;color:#333;font-weight:400;font-family:'Liberation Sans';transform:scaleX(0.9692);">38</div>
<div class="t" style="left:12.60px;top:644.10px;font-size:14px;color:#333;font-weight:400;font-family:'Liberation Sans';transform:scaleX(0.9692);">39</div>
<div class="t" style="left:12.60px;top:668.10px;font-size:14px;color:#333;font-weight:400;font-family:'Liberation Sans';transform:scaleX(0.9692);">40</div>
<div class="t" style="left:12.60px;top:692.10px;font-size:14px;color:#333;font-weight:400;font-family:'Liberation Sans';transform:scaleX(0.9692);">41</div>
<div class="t" style="left:12.60px;top:716.10px;font-size:14px;color:#333;font-weight:400;font-family:'Liberation Sans';transform:scaleX(0.9692);">42</div>
<div class="t" style="left:12.60px;top:740.10px;font-size:14px;color:#333;font-weight:400;font-family:'Liberation Sans';transform:scaleX(0.9692);">43</div>
<div class="t" style="left:12.60px;top:764.10px;font-size:14px;color:#333;font-weight:400;font-family:'Liberation Sans';transform:scaleX(0.9692);">44</div>
<div class="t" style="left:12.60px;top:788.10px;font-size:14px;color:#333;font-weight:400;font-family:'Liberation Sans';transform:scaleX(0.9692);">45</div>
<div class="t" style="left:12.60px;top:812.10px;font-size:14px;color:#333;font-weight:400;font-family:'Liberation Sans';transform:scaleX(0.9692);">46</div>
<div class="t" style="left:275.14px;top:261.60px;font-size:16px;color:#3a3a3a;font-weight:400;font-family:'Liberation Sans';transform:scaleX(1.0626);">Mixing Department</div>
<div class="t" style="left:235.16px;top:285.60px;font-size:16px;color:#3a3a3a;font-weight:400;font-family:'Liberation Sans';transform:scaleX(1.0422);">Equivalent Units of Production</div>
<div class="t" style="left:444.34px;top:309.60px;font-size:16px;color:#3a3a3a;font-weight:400;font-family:'Liberation Sans';transform:scaleX(1.0625);">Materials</div>
<div class="t" style="left:556.80px;top:309.60px;font-size:16px;color:#3a3a3a;font-weight:400;font-family:'Liberation Sans';transform:scaleX(1.0059);">Conversion</div>
<div class="t" style="left:38.14px;top:333.60px;font-size:16px;color:#3a3a3a;font-weight:400;font-family:'Liberation Sans';transform:scaleX(1.0561);">Units transferred to the next department</div>
<div class="t" style="left:37.77px;top:357.60px;font-size:16px;color:#3a3a3a;font-weight:400;font-family:'Liberation Sans';transform:scaleX(1.0256);">Ending work in process:</div>
<div class="t" style="left:45.53px;top:381.60px;font-size:16px;color:#3a3a3a;font-weight:400;font-family:'Liberation Sans';transform:scaleX(1.0656);">Materials</div>
<div class="t" style="left:46.60px;top:405.60px;font-size:16px;color:#3a3a3a;font-weight:400;font-family:'Liberation Sans';transform:scaleX(0.9971);">Conversion</div>
<div class="t" style="left:37.75px;top:429.60px;font-size:16px;color:#3a3a3a;font-weight:400;font-family:'Liberation Sans';transform:scaleX(1.0538);">Equivalent units of production</div>
<div class="t" style="left:38.80px;top:477.60px;font-size:16px;color:#3a3a3a;font-weight:400;font-family:'Liberation Sans';transform:scaleX(1.0412);">2. Compute cost per equivalent unit.</div>
<div class="t" style="left:275.14px;top:501.60px;font-size:16px;color:#3a3a3a;font-weight:400;font-family:'Liberation Sans';transform:scaleX(1.0626);">Mixing Department</div>
<div class="t" style="left:259.10px;top:525.60px;font-size:16px;color:#3a3a3a;font-weight:400;font-family:'Liberation Sans';transform:scaleX(1.0139);">Cost per Equivalent Unit</div>
<div class="t" style="left:444.34px;top:549.60px;font-size:16px;color:#3a3a3a;font-weight:400;font-family:'Liberation Sans';transform:scaleX(1.0625);">Materials</div>
<div class="t" style="left:556.80px;top:549.60px;font-size:16px;color:#3a3a3a;font-weight:400;font-family:'Liberation Sans';transform:scaleX(1.0059);">Conversion</div>
<div class="t" style="left:38.80px;top:573.60px;font-size:16px;color:#3a3a3a;font-weight:400;font-family:'Liberation Sans';transform:scaleX(1.0153);">Cost of beginning work in process</div>
<div class="t" style="left:38.80px;top:597.60px;font-size:16px;color:#3a3a3a;font-weight:400;font-family:'Liberation Sans';transform:scaleX(1.0328);">Cost added during the period</div>
<div class="t" style="left:38.80px;top:621.60px;font-size:16px;color:#3a3a3a;font-weight:400;font-family:'Liberation Sans';transform:scaleX(0.9921);">Total cost</div>
<div class="t" style="left:37.75px;top:645.60px;font-size:16px;color:#3a3a3a;font-weight:400;font-family:'Liberation Sans';transform:scaleX(1.0538);">Equivalent units of production</div>
<div class="t" style="left:38.80px;top:669.60px;font-size:16px;color:#3a3a3a;font-weight:400;font-family:'Liberation Sans';transform:scaleX(1.0317);">Cost per equivalent unit</div>
<div class="t" style="left:38.80px;top:717.60px;font-size:16px;color:#3a3a3a;font-weight:400;font-family:'Liberation Sans';transform:scaleX(0.9783);">3. Assign costs.</div>
<div class="t" style="left:329.24px;top:741.60px;font-size:16px;color:#3a3a3a;font-weight:400;font-family:'Liberation Sans';transform:scaleX(1.0551);">Mixing Department</div>
<div class="t" style="left:137.00px;top:765.60px;font-size:16px;color:#3a3a3a;font-weight:400;font-family:'Liberation Sans';transform:scaleX(1.0137);">Costs of Ending Work in Process Inventory and the Units Transferred Out</div>
<div class="t" style="left:444.34px;top:789.60px;font-size:16px;color:#3a3a3a;font-weight:400;font-family:'Liberation Sans';transform:scaleX(1.0625);">Materials</div>
<div class="t" style="left:556.80px;top:789.60px;font-size:16px;color:#3a3a3a;font-weight:400;font-family:'Liberation Sans';transform:scaleX(1.0059);">Conversion</div>
<div class="t" style="left:693.00px;top:789.60px;font-size:16px;color:#3a3a3a;font-weight:400;font-family:'Liberation Sans';transform:scaleX(1.0318);">Total</div>
<div class="t" style="left:37.76px;top:813.60px;font-size:16px;color:#3a3a3a;font-weight:400;font-family:'Liberation Sans';transform:scaleX(1.0364);">Ending work in process inventory:</div>
</body></html>
